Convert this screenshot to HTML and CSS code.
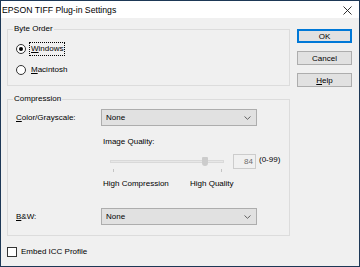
FILE: index.html
```html
<!DOCTYPE html>
<html lang="en">
<head>
  <meta charset="UTF-8">
  <title>EPSON TIFF Plug-in Settings</title>
  <link rel="stylesheet" href="styles.css">
</head>
<body>
  <div class="window">
    <div class="titlebar">
      <span class="title">EPSON TIFF Plug-in Settings</span>
      <svg class="close" width="9" height="9" viewBox="0 0 9 9">
        <path d="M0.5 0.5 L8.5 8.5 M8.5 0.5 L0.5 8.5" stroke="#1a1a1a" stroke-width="0.9" fill="none"/>
      </svg>
    </div>
    <div class="content">
      <div class="left">
        <fieldset class="group byte-order">
          <legend>Byte Order</legend>
          <div class="option">
            <span class="radio checked"></span>
            <span class="focus"><u>W</u>indows</span>
          </div>
          <div class="option">
            <span class="radio"></span>
            <span class="plain"><u>M</u>acintosh</span>
          </div>
        </fieldset>
        <fieldset class="group compression">
          <legend>Compression</legend>
          <div class="row">
            <span class="row-label"><u>C</u>olor/Grayscale:</span>
            <div class="select">
              <span>None</span>
              <svg width="7" height="4" viewBox="0 0 7 4"><path d="M0.5 0.5 L3.5 3.3 L6.5 0.5" stroke="#555" stroke-width="0.9" fill="none"/></svg>
            </div>
          </div>
          <div class="quality">
            <div class="quality-title">Image Quality:</div>
            <div class="quality-row">
              <div class="slider">
                <div class="slider-bar">
                  <div class="track"></div>
                  <div class="thumb"></div>
                </div>
                <div class="ticks"><span></span><span></span></div>
              </div>
              <div class="number">84</div>
              <span class="range">(0-99)</span>
            </div>
            <div class="quality-ends">
              <span class="end-low">High Compression</span>
              <span>High Quality</span>
            </div>
          </div>
          <div class="row bw">
            <span class="row-label"><u>B</u>&amp;W:</span>
            <div class="select">
              <span>None</span>
              <svg width="7" height="4" viewBox="0 0 7 4"><path d="M0.5 0.5 L3.5 3.3 L6.5 0.5" stroke="#555" stroke-width="0.9" fill="none"/></svg>
            </div>
          </div>
        </fieldset>
      </div>
      <div class="buttons">
        <button class="default">OK</button>
        <button>Cancel</button>
        <button><u>H</u>elp</button>
      </div>
    </div>
    <div class="footer">
      <span class="checkbox"></span>
      <span>Embed ICC Profile</span>
    </div>
  </div>
</body>
</html>
```

FILE: styles.css
```css
html, body {
  margin: 0;
  padding: 0;
}
body {
  font-family: "Liberation Sans", Arial, sans-serif;
  font-size: 8px;
  color: #000;
}
.window {
  width: 360px;
  height: 267px;
  box-sizing: border-box;
  border: 1px solid #1d3856;
  background-color: #f0f0f0;
}
.titlebar {
  height: 17px;
  background-color: #fff;
  display: flex;
  align-items: center;
  justify-content: space-between;
  padding: 0 7px 0 1px;
}
.title {
  font-size: 8.7px;
  line-height: 10px;
}
.close {
  margin-top: 2px;
}
.content {
  display: flex;
  padding: 6px 0 0 6px;
}
.left {
  width: 283px;
}
.group {
  margin: 0;
  padding: 0 0 0 8px;
  border: 1px solid #dcdcdc;
  min-width: 0;
}
.group legend {
  padding: 0 1px;
  margin-left: -3px;
  line-height: 10px;
}
.byte-order {
  height: 62px;
  box-sizing: border-box;
  padding-top: 8px;
}
.option {
  display: flex;
  align-items: center;
  height: 14px;
  margin-bottom: 7px;
}
.radio {
  width: 8px;
  height: 8px;
  border: 1px solid #333;
  border-radius: 50%;
  background-color: #fff;
  margin-right: 3px;
  position: relative;
  box-sizing: content-box;
}
.radio.checked::after {
  content: "";
  position: absolute;
  left: 2px;
  top: 2px;
  width: 4px;
  height: 4px;
  border-radius: 50%;
  background-color: #000;
}
.focus, .plain {
  line-height: 10px;
  padding: 1px 1px;
  border: 1px dotted transparent;
}
.focus {
  border-color: #000;
}
.compression {
  margin-top: 8px;
  padding-top: 5px;
  padding-bottom: 10px;
}
.row {
  display: flex;
  align-items: center;
}
.row-label {
  width: 85px;
  line-height: 10px;
}
.select {
  width: 156px;
  height: 17px;
  box-sizing: border-box;
  border: 1px solid #adadad;
  background-color: #e1e1e1;
  display: flex;
  align-items: center;
  justify-content: space-between;
  padding: 0 5px 0 4px;
}
.quality {
  margin-left: 87px;
  padding-top: 11px;
}
.quality-title {
  line-height: 10px;
}
.quality-row {
  display: flex;
  align-items: flex-start;
  margin-top: 7px;
}
.slider {
  width: 114px;
  margin-left: 7px;
  margin-top: 3px;
}
.slider-bar {
  height: 9px;
  display: flex;
  align-items: center;
  position: relative;
}
.track {
  flex: 1;
  height: 3px;
  box-sizing: border-box;
  border: 1px solid #d9d9d9;
  background-color: #e7e7e7;
}
.thumb {
  position: absolute;
  left: 92px;
  top: 0;
  width: 6px;
  height: 9px;
  background-color: #cccccc;
  border-radius: 1px 1px 3px 3px;
}
.ticks {
  display: flex;
  justify-content: space-between;
  padding: 0 2px 0 3px;
  margin-top: 3px;
}
.ticks span {
  width: 1px;
  height: 3px;
  background-color: #c4c4c4;
}
.number {
  width: 23px;
  height: 15px;
  box-sizing: border-box;
  border: 1px solid #cccccc;
  margin-left: 9px;
  color: #6d6d6d;
  text-align: right;
  padding-right: 2px;
  line-height: 13px;
}
.range {
  margin-left: 3px;
  line-height: 10px;
  margin-top: 1px;
}
.quality-ends {
  display: flex;
  line-height: 10px;
  margin-top: 7px;
}
.end-low {
  width: 87px;
}
.bw {
  margin-top: 19px;
}
.buttons {
  display: flex;
  flex-direction: column;
  gap: 8px;
  margin-left: 7px;
  margin-top: 5px;
}
button {
  width: 55px;
  height: 14px;
  padding: 0;
  font-family: inherit;
  font-size: 8px;
  color: #000;
  background-color: #e1e1e1;
  border: 1px solid #adadad;
}
button.default {
  border-color: #0078d7;
  box-shadow: inset 0 0 0 1px #0078d7;
}
.footer {
  display: flex;
  align-items: center;
  padding-left: 6px;
  margin-top: 11px;
  line-height: 10px;
}
.checkbox {
  width: 8px;
  height: 8px;
  border: 1px solid #333;
  background-color: #fff;
  margin-right: 4px;
}
```
